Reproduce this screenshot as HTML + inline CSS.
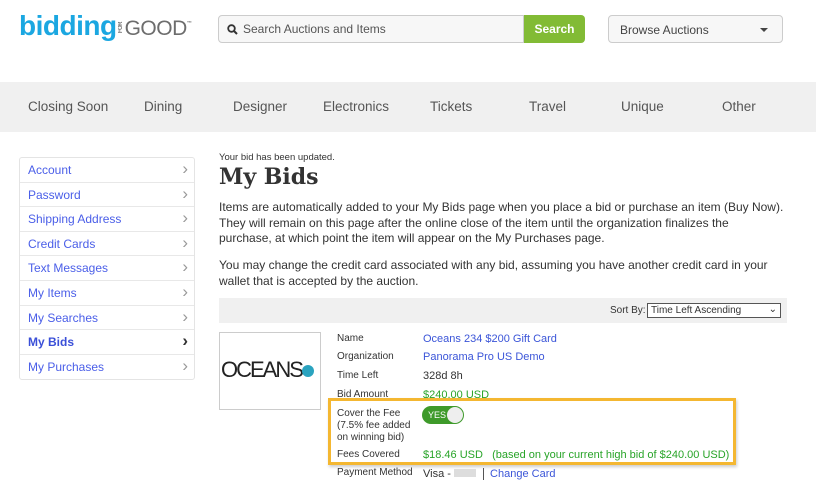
<!DOCTYPE html>
<html><head><meta charset="utf-8"><style>
*{box-sizing:border-box;margin:0;padding:0}
body{width:816px;height:501px;overflow:hidden;background:#fff;font-family:"Liberation Sans",sans-serif;color:#333;position:relative}
.abs{position:absolute}
.logo{left:19px;top:10px;font-size:28px;font-weight:bold;color:#1ba7e1;letter-spacing:-0.5px;white-space:nowrap}
.logo .for{font-size:6px;color:#777;display:inline-block;writing-mode:vertical-rl;transform:rotate(180deg);vertical-align:middle;margin:0 1px}
.logo .good{font-weight:normal;color:#6d6d6d;font-size:21px;letter-spacing:-0.5px}
.search{left:218px;top:15px;width:306px;height:28px;border:1px solid #ccc;border-radius:4px 0 0 4px;background:#f7f7f7;font-size:12px;color:#555;padding:6px 0 0 24px}
.btn{left:524px;top:15px;width:61px;height:28px;background:#82bb35;color:#fff;font-weight:bold;font-size:12px;text-align:center;line-height:28px;border-radius:0 4px 4px 0}
.browse{left:608px;top:15px;width:175px;height:28px;border:1px solid #ccc;border-radius:4px;background:#f7f7f7;font-size:12px;color:#444;padding:7px 0 0 11px}
.browse:after{content:"";position:absolute;right:14px;top:12px;border:4px solid transparent;border-top-color:#444}
.nav{left:0;top:82px;width:816px;height:50px;background:#f0f0f0;font-size:13.5px;color:#555}
.nav span{position:absolute;top:17px}
.side{left:19px;top:157px;width:176px;border:1px solid #e4e4e4;border-radius:3px}
.side div{height:24.6px;border-bottom:1px solid #e8e8e8;font-size:12px;color:#4a5ee8;padding:5px 0 0 8px;position:relative}
.side div:last-child{border-bottom:none}
.side div:after{content:"›";position:absolute;right:6px;top:1px;font-size:17px;color:#999}
.side div.b{font-weight:bold;color:#3a4fd8}
.side div.b:after{color:#333}
p{font-size:12px;line-height:15.5px;color:#333;white-space:nowrap}
.lab{font-size:10px;color:#333}
.val{font-size:11px}
.blue{color:#3b55d8}.green{color:#28a428}
</style></head><body>
<div class="abs logo">bidding<span class="for">FOR</span><span class="good">GOOD</span><sup style="font-size:5px;color:#777">™</sup></div>
<div class="abs search">Search Auctions and Items
<svg class="abs" style="left:8px;top:8px" width="11" height="11" viewBox="0 0 11 11"><circle cx="4.5" cy="4.5" r="3.3" fill="none" stroke="#333" stroke-width="1.8"/><path d="M7 7l3 3" stroke="#333" stroke-width="2"/></svg></div>
<div class="abs btn">Search</div>
<div class="abs browse">Browse Auctions</div>
<div class="abs nav"><span style="left:28px">Closing Soon</span><span style="left:144px">Dining</span><span style="left:233px">Designer</span><span style="left:323px">Electronics</span><span style="left:430px">Tickets</span><span style="left:529px">Travel</span><span style="left:621px">Unique</span><span style="left:722px">Other</span></div>
<div class="abs side"><div>Account</div><div>Password</div><div>Shipping Address</div><div>Credit Cards</div><div>Text Messages</div><div>My Items</div><div>My Searches</div><div class="b">My Bids</div><div>My Purchases</div></div>
<div class="abs" style="left:219px;top:152px;font-size:9.5px">Your bid has been updated.</div>
<div class="abs" style="left:219px;top:164px;font-family:'DejaVu Serif',serif;font-weight:bold;font-size:22px;color:#333">My Bids</div>
<p class="abs" style="left:219px;top:200px">Items are automatically added to your My Bids page when you place a bid or purchase an item (Buy Now).<br>They will remain on this page after the online close of the item until the organization finalizes the<br>purchase, at which point the item will appear on the My Purchases page.</p>
<p class="abs" style="left:219px;top:258px">You may change the credit card associated with any bid, assuming you have another credit card in your<br>wallet that is accepted by the auction.</p>
<div class="abs" style="left:219px;top:298px;width:568px;height:25px;background:#f0f0f0"></div>
<div class="abs" style="left:610px;top:305px;font-size:10px">Sort By:</div>
<div class="abs" style="left:647px;top:303px;width:134px;height:15px;border:1px solid #555;background:#fff;font-size:10px;padding:1px 3px">Time Left Ascending<span style="position:absolute;right:3px;top:0">⌄</span></div>
<div class="abs" style="left:219px;top:332px;width:102px;height:78px;border:1px solid #ccc;font-size:22px;letter-spacing:-2px;padding:24px 0 0 1px;color:#222">OCEANS<span style="display:inline-block;width:12px;height:12px;border-radius:50%;background:#2aa3bf;vertical-align:middle"></span></div>
<div class="abs lab" style="left:337px;top:333px">Name</div><div class="abs val blue" style="left:423px;top:333px">Oceans 234 $200 Gift Card</div>
<div class="abs lab" style="left:337px;top:351px">Organization</div><div class="abs val blue" style="left:423px;top:351px">Panorama Pro US Demo</div>
<div class="abs lab" style="left:337px;top:370px">Time Left</div><div class="abs val" style="left:423px;top:370px">328d 8h</div>
<div class="abs lab" style="left:337px;top:389px">Bid Amount</div><div class="abs val green" style="left:423px;top:389px">$240.00 USD</div>
<div class="abs" style="left:328px;top:398px;width:408px;height:67px;border:3px solid #f4b731;background:#fff;box-shadow:1px 2px 3px rgba(0,0,0,.2)"></div>
<div class="abs lab" style="left:337px;top:408px;line-height:12px">Cover the Fee<br>(7.5% fee added<br>on winning bid)</div>
<div class="abs" style="left:422px;top:406px;width:42px;height:18px;border-radius:9px;background:#3e9a2a;color:#fff;font-size:9px;padding:4px 0 0 6px">YES<span style="position:absolute;right:1px;top:1px;width:16px;height:16px;border-radius:50%;background:#eee"></span></div>
<div class="abs lab" style="left:337px;top:449px">Fees Covered</div>
<div class="abs val green" style="left:423px;top:449px">$18.46 USD &nbsp;&nbsp;(based on your current high bid of $240.00 USD)</div>
<div class="abs lab" style="left:337px;top:467px">Payment Method</div>
<div class="abs val" style="left:423px;top:468px">Visa - <span style="display:inline-block;width:22px;height:8px;background:#ddd"></span> <span style="border-left:1px solid #555;margin-left:4px;padding-left:6px" class="blue">Change Card</span></div>
</body></html>
